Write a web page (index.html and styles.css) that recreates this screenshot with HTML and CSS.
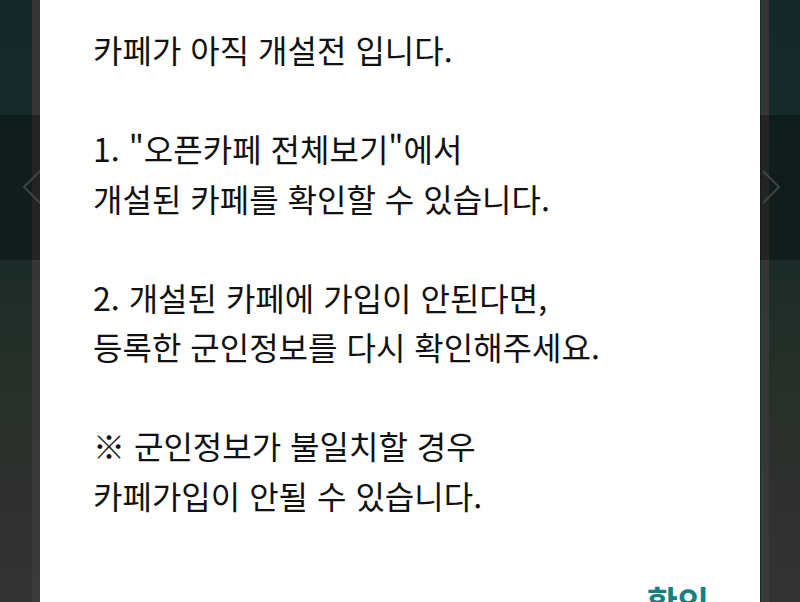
FILE: index.html
```html
<!DOCTYPE html>
<html lang="ko">
<head>
<meta charset="utf-8">
<title>카페 안내</title>
<link rel="stylesheet" href="styles.css">
</head>
<body>
<div class="page">
  <div class="peek peek-left"></div>
  <div class="gap"></div>
  <div class="center"></div>
  <div class="gap"></div>
  <div class="peek peek-right"></div>

  <div class="band">
    <svg class="arrow arrow-left" width="20" height="36" viewBox="0 0 20 36"><path d="M18 1 L2 17 L18 33" fill="none" stroke="#3d4543" stroke-width="2"/></svg>
    <svg class="arrow arrow-right" width="20" height="36" viewBox="0 0 20 36"><path d="M2 1 L18 17 L2 33" fill="none" stroke="#3d4543" stroke-width="2"/></svg>
  </div>

  <div class="modal">
    <div class="msg">
      <p>카페가 아직 개설전 입니다.</p>
      <p>1. "오픈카페 전체보기"에서<br>개설된 카페를 확인할 수 있습니다.</p>
      <p>2. 개설된 카페에 가입이 안된다면,<br>등록한 군인정보를 다시 확인해주세요.</p>
      <p>※ 군인정보가 불일치할 경우<br>카페가입이 안될 수 있습니다.</p>
    </div>
    <div class="actions">
      <button class="ok">확인</button>
    </div>
  </div>
</div>
</body>
</html>
```

FILE: styles.css
```css
html, body {
  margin: 0;
  padding: 0;
}
body {
  width: 800px;
  height: 602px;
  overflow: hidden;
  background: #333;
  font-family: "Noto Sans CJK KR", "Noto Sans", sans-serif;
}
.page {
  position: relative;
  display: flex;
  width: 800px;
  height: 602px;
}
.peek {
  flex: none;
  background: linear-gradient(to bottom, #14282a 0px, #172b2b 115px, #1c2b28 260px, #263028 380px, #2e302e 480px, #333333 602px);
}
.peek-left { width: 32px; }
.peek-right { width: 31px; }
.gap {
  flex: none;
  width: 8px;
  background: linear-gradient(to bottom, #353535 0px, #363636 300px, #3a3a3a 602px);
}
.center {
  flex: 1;
  background: #1a2a28;
}
.band {
  position: absolute;
  left: 0;
  top: 115px;
  width: 800px;
  height: 145px;
  background: rgba(0, 0, 0, 0.32);
}
.arrow {
  position: absolute;
  top: 55px;
}
.arrow-left { left: 22px; }
.arrow-right { left: 761px; }
.modal {
  position: absolute;
  left: 40px;
  top: 0;
  width: 720px;
  height: 602px;
  background: #fff;
  box-sizing: border-box;
  padding: 25px 51px 0 53px;
}
.msg p {
  margin: 0 0 49.5px;
  font-size: 32px;
  line-height: 49.5px;
  color: #111;
}
.msg p:last-child { margin-bottom: 0; }
.actions {
  display: flex;
  justify-content: flex-end;
  margin-top: 57px;
}
.ok {
  border: 0;
  background: none;
  padding: 0;
  font-family: inherit;
  font-size: 34px;
  font-weight: 700;
  line-height: 49.5px;
  color: #17807e;
}
```
